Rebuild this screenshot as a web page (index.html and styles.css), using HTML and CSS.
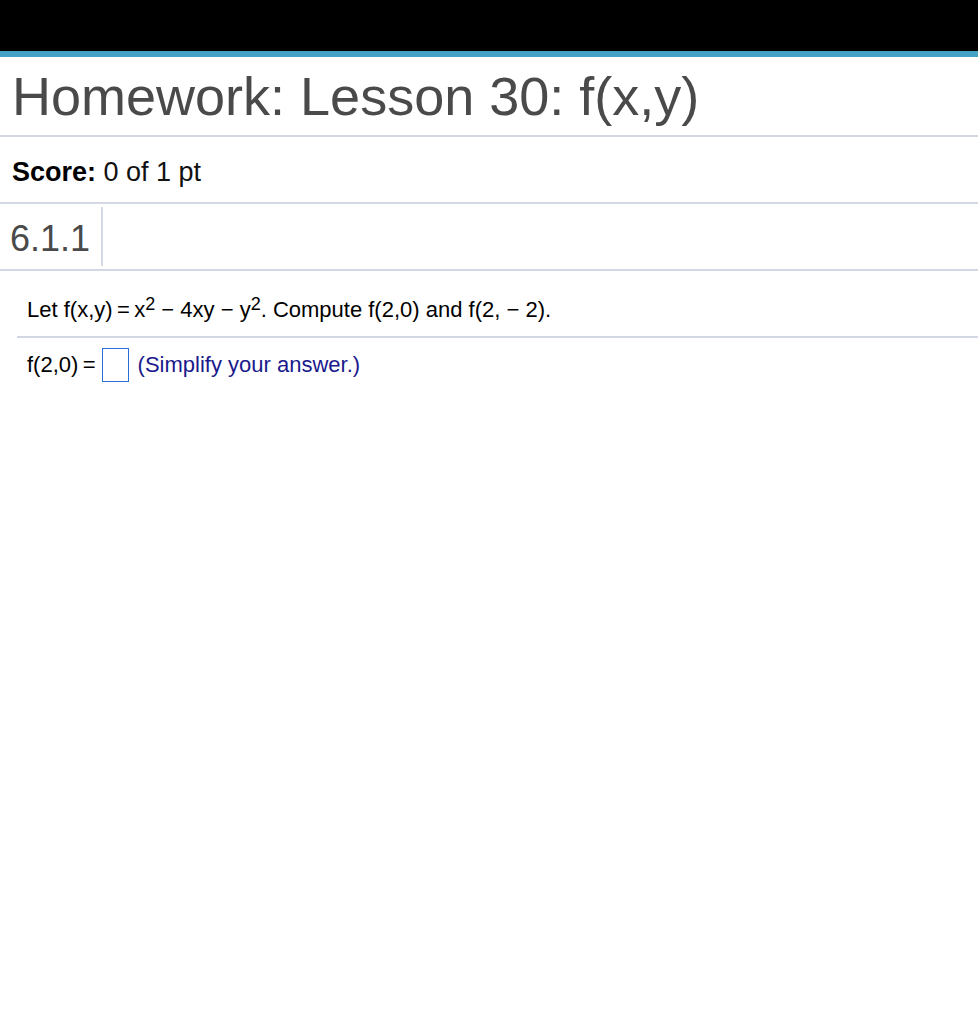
FILE: index.html
```html
<!DOCTYPE html>
<html>
<head>
<meta charset="utf-8">
<link rel="stylesheet" href="styles.css">
</head>
<body>
<div class="topbar"></div>
<div class="accent"></div>
<h1 class="title">Homework: Lesson 30: f(x,y)</h1>
<div class="score"><b>Score:</b> 0 of 1 pt</div>
<div class="qrow">
  <div class="qnum">6.1.1</div>
</div>
<div class="question">
  <div class="prompt">Let f(x,y)&#8201;=&#8201;x<sup>2</sup> &#8722; 4xy &#8722; y<sup>2</sup>. Compute f(2,0) and f(2, &#8722; 2).</div>
  <div class="answer"><span>f(2,0)&#8201;=</span><span class="box"></span><span class="hint">(Simplify your answer.)</span></div>
</div>
</body>
</html>
```
FILE: styles.css
```css
html, body {
  margin: 0;
  padding: 0;
  background: #fff;
  font-family: "Liberation Sans", Arial, sans-serif;
}
.topbar {
  height: 51px;
  background: #000;
}
.accent {
  height: 6px;
  background: #45a2c4;
}
.title {
  margin: 0;
  height: 80px;
  box-sizing: border-box;
  padding: 8px 0 0 12px;
  font-size: 54px;
  font-weight: normal;
  line-height: 62px;
  color: #4a4a4a;
  border-bottom: 2px solid #d4d8e4;
}
.score {
  height: 67px;
  box-sizing: border-box;
  padding: 20px 0 0 12px;
  font-size: 27px;
  line-height: 30px;
  color: #111;
  border-bottom: 2px solid #d4d8e4;
}
.score b {
  color: #000;
}
.qrow {
  height: 67px;
  box-sizing: border-box;
  display: flex;
  align-items: stretch;
  padding: 3px 0;
  border-bottom: 2px solid #d4d8e4;
}
.qnum {
  padding: 12px 11px 0 10px;
  font-size: 36px;
  line-height: 40px;
  color: #4a4a4a;
  border-right: 2px solid #d4d8e4;
}
.question {
  padding-left: 17px;
}
.prompt {
  height: 67px;
  box-sizing: border-box;
  padding: 25px 0 0 10px;
  font-size: 22px;
  line-height: 28px;
  color: #000;
  border-bottom: 2px solid #d4d8e4;
}
.prompt sup {
  font-size: 18px;
  line-height: 0;
  vertical-align: 0;
  position: relative;
  top: -7px;
}
.answer {
  padding: 10px 0 0 10px;
  font-size: 22px;
  line-height: 34px;
  color: #000;
  display: flex;
  align-items: center;
  gap: 6px;
}
.box {
  display: inline-block;
  width: 25px;
  height: 32px;
  border: 1px solid #2a6fd8;
  margin-right: 3px;
}
.hint {
  color: #1a1a8c;
}
```
